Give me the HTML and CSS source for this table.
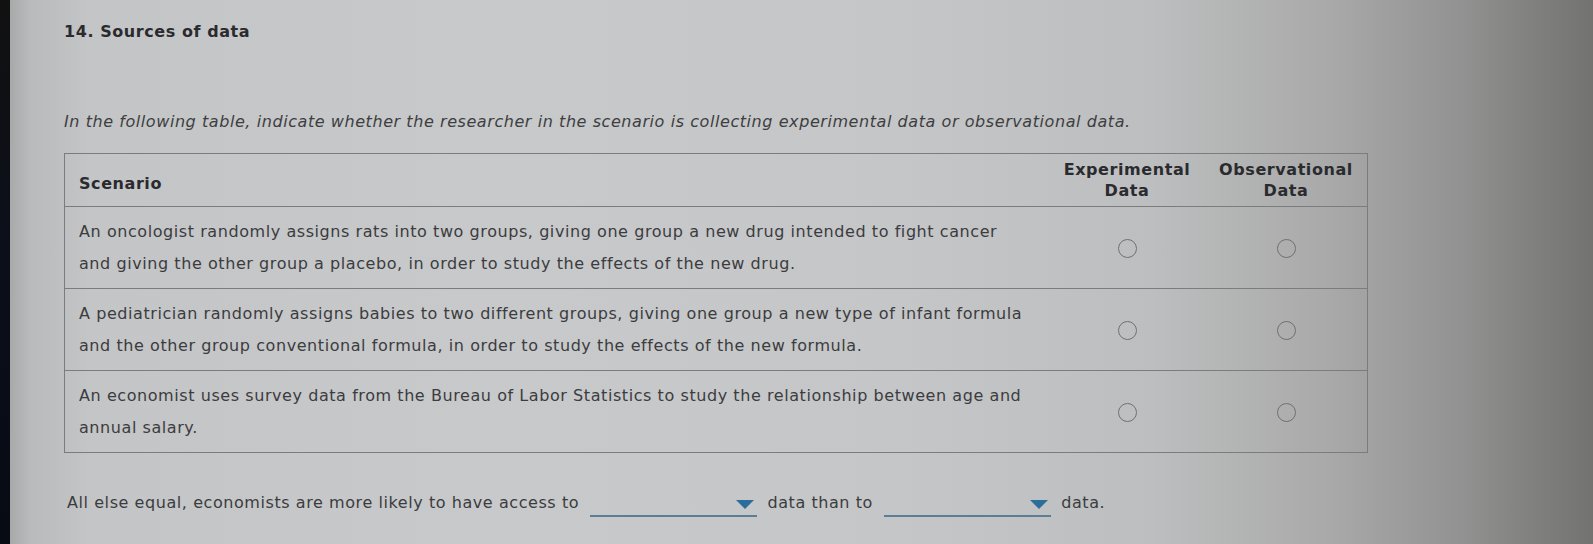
FILE: index.html
```html
<!DOCTYPE html>
<html>
<head>
<meta charset="utf-8">
<link rel="stylesheet" href="styles.css">
</head>
<body>
<div class="screen">
  <div class="edge"></div>
  <main class="page">
    <h1 class="title">14. Sources of data</h1>
    <p class="instr">In the following table, indicate whether the researcher in the scenario is collecting experimental data or observational data.</p>
    <table class="grid">
      <thead>
        <tr>
          <th class="scen">Scenario</th>
          <th class="opt exp">Experimental<br>Data</th>
          <th class="opt obs">Observational<br>Data</th>
        </tr>
      </thead>
      <tbody>
        <tr>
          <td class="scen">An oncologist randomly assigns rats into two groups, giving one group a new drug intended to fight cancer<br>and giving the other group a placebo, in order to study the effects of the new drug.</td>
          <td class="opt"><span class="radio"></span></td>
          <td class="opt"><span class="radio"></span></td>
        </tr>
        <tr>
          <td class="scen">A pediatrician randomly assigns babies to two different groups, giving one group a new type of infant formula<br>and the other group conventional formula, in order to study the effects of the new formula.</td>
          <td class="opt"><span class="radio"></span></td>
          <td class="opt"><span class="radio"></span></td>
        </tr>
        <tr>
          <td class="scen">An economist uses survey data from the Bureau of Labor Statistics to study the relationship between age and<br>annual salary.</td>
          <td class="opt"><span class="radio"></span></td>
          <td class="opt"><span class="radio"></span></td>
        </tr>
      </tbody>
    </table>
    <p class="fill">All else equal, economists are more likely to have access to <span class="drop"><span class="caret"></span></span> data than to <span class="drop"><span class="caret"></span></span> data.</p>
  </main>
</div>
</body>
</html>
```
FILE: styles.css
```css
html, body {
  margin: 0;
  padding: 0;
}
body {
  width: 1593px;
  height: 544px;
  overflow: hidden;
  font-family: "DejaVu Sans", Verdana, sans-serif;
  font-size: 16px;
  letter-spacing: 0.57px;
  color: #3b3c3e;
  background: linear-gradient(to right, #9fa0a0 0px, #b9babb 30px, #c4c5c7 90px, #c8c9cb 500px, #c5c6c8 900px, #bdbebf 1150px, #a9a9a9 1330px, #929292 1460px, #727270 1593px);
}
.screen {
  display: flex;
  height: 544px;
}
.edge {
  width: 10px;
  flex: none;
  background: linear-gradient(to bottom, #111 0%, #0c0f1a 45%, #080a14 100%);
}
.page {
  padding: 23px 0 0 54px;
}
.title {
  margin: 0;
  font-size: 16px;
  line-height: 18px;
  font-weight: bold;
  color: #2a2b2e;
}
.instr {
  margin: 71px 0 0;
  font-size: 16px;
  line-height: 20px;
  font-style: italic;
  color: #3d3e40;
}
.grid {
  margin-top: 21px;
  width: 1304px;
  border-collapse: collapse;
  border: 1px solid #7b7c7e;
  font-size: 16px;
}
.grid th {
  font-weight: bold;
  color: #2a2b2e;
  line-height: 21px;
  padding: 5px 0 5px;
  border-bottom: 1px solid #7b7c7e;
}
.grid th.scen {
  text-align: left;
  padding-left: 14px;
  padding-top: 11px;
}
.grid th.exp { width: 156px; }
.grid th.obs { width: 162px; }
.grid td {
  border-bottom: 1px solid #7b7c7e;
  vertical-align: middle;
}
.grid td.scen {
  padding: 9px 0 8px 14px;
  line-height: 32px;
}
.grid td.opt {
  text-align: center;
}
.radio {
  display: inline-block;
  width: 17px;
  height: 17px;
  border: 1.5px solid #6f7073;
  border-radius: 50%;
  vertical-align: middle;
}
.fill {
  margin: 40px 0 0 3px;
  font-size: 16px;
  line-height: 20px;
  color: #3b3c3e;
}
.drop {
  display: inline-block;
  position: relative;
  width: 167px;
  height: 20px;
  margin: 0 5px 0 5px;
  border-bottom: 2px solid #5b7e97;
  vertical-align: -9px;
}
.caret {
  position: absolute;
  right: 3px;
  top: 5px;
  width: 0;
  height: 0;
  border-left: 9px solid transparent;
  border-right: 9px solid transparent;
  border-top: 9px solid #2b6e9b;
}
```
